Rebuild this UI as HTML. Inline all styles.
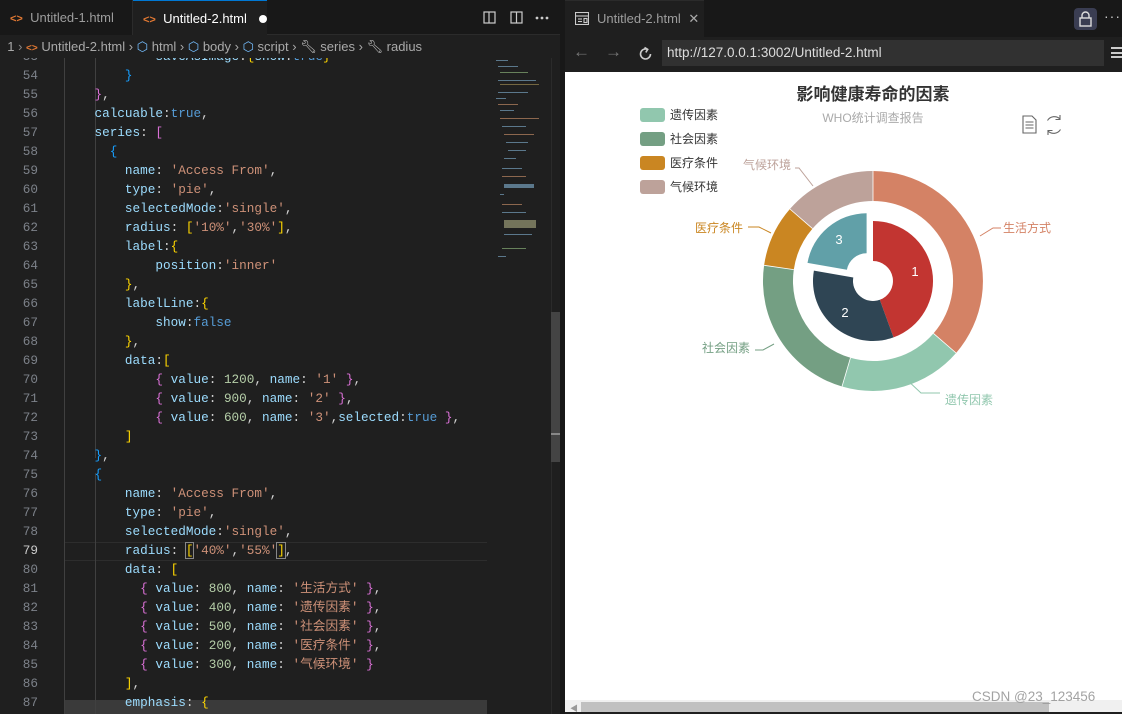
<!DOCTYPE html>
<html><head><meta charset="utf-8">
<style>
*{margin:0;padding:0;box-sizing:border-box}
body{width:1122px;height:714px;overflow:hidden;background:#1f1f1f;position:relative;font-family:"Liberation Sans","Noto Sans CJK SC",sans-serif}
.abs{position:absolute}
.tabbar{left:0;top:0;width:565px;height:35px;background:#181818;border-bottom:1px solid #2b2b2b}
.tab{top:0;height:35px;font-size:13px;line-height:35px;color:#9d9d9d;padding-left:10px}
.crumb{left:0;top:35px;width:565px;height:23px;background:#1f1f1f;font-size:13px;color:#a9a9a9;line-height:23px;white-space:nowrap}
.code{left:0;top:58px;width:551px;height:656px;overflow:hidden;background:#1f1f1f}
.lines{position:absolute;left:0;top:-11.5px;width:100%}
.ln{height:19px;line-height:19px;font-family:"Liberation Mono","Noto Sans CJK SC",monospace;font-size:12.7px;white-space:pre;position:relative}
.ln .num{position:absolute;left:0;width:38px;text-align:right;color:#7d828a}
.ln .t{position:absolute;left:64px;color:#d4d4d4}
.k{color:#9cdcfe}.s{color:#ce9178}.n{color:#b5cea8}.b{color:#569cd6}.y{color:#ffd700}.p{color:#da70d6}.u{color:#179fff}
</style></head><body>
<div class="abs tabbar"></div>
<div class="abs tab" style="left:0;width:133px;background:#181818;border-right:1px solid #2b2b2b"><span style="color:#e37933;font-size:11px;font-weight:bold">&lt;&gt;</span>&nbsp; Untitled-1.html</div>
<div class="abs tab" style="left:133px;width:134px;background:#1f1f1f;color:#fff;border-top:1px solid #0078d4;height:36px"><span style="color:#e37933;font-size:11px;font-weight:bold">&lt;&gt;</span>&nbsp; Untitled-2.html <span style="display:inline-block;width:8px;height:8px;border-radius:50%;background:#fff;margin-left:8px"></span></div>
<svg class="abs" style="left:482px;top:10px" width="70" height="16" viewBox="0 0 70 16" fill="none" stroke="#ccc" stroke-width="1.2">
<rect x="2" y="2" width="11" height="11"/><line x1="7" y1="2" x2="7" y2="13"/>
<rect x="29" y="2" width="11" height="11"/><line x1="34.5" y1="2" x2="34.5" y2="13"/>
<circle cx="55" cy="8" r="0.8" fill="#ccc"/><circle cx="60" cy="8" r="0.8" fill="#ccc"/><circle cx="65" cy="8" r="0.8" fill="#ccc"/>
</svg>
<div class="abs crumb">&nbsp;&nbsp;1 <span style="color:#888">›</span> <span style="color:#e37933;font-size:10px;font-weight:bold">&lt;&gt;</span> Untitled-2.html <span>›</span> <span style="color:#75beff">⬡</span> html › <span style="color:#75beff">⬡</span> body › <span style="color:#75beff">⬡</span> script › <span style="color:#ccc">🔧︎</span> series › <span style="color:#ccc">🔧︎</span> radius</div>
<div class="abs code">
<div class="abs" style="left:64px;top:484px;width:423px;height:19px;border-top:1px solid #2d2d2d;border-bottom:1px solid #2d2d2d"></div>
<div class="abs" style="left:64px;top:642px;width:423px;height:14px;background:#3a3a3a"></div>
<div class="abs" style="left:64px;top:0;width:1px;height:656px;background:#404040"></div>
<div class="abs" style="left:95px;top:0;width:1px;height:400px;background:#404040"></div>
<div class="abs" style="left:95px;top:415px;width:1px;height:241px;background:#404040"></div>
<div class="lines">
<div class="ln"><span class="num">53</span><span class="t">            <span class="k">saveAsImage</span>:<span class="y">{</span><span class="k">show</span>:<span class="b">true</span><span class="y">}</span></span></div>
<div class="ln"><span class="num">54</span><span class="t">        <span class="u">}</span></span></div>
<div class="ln"><span class="num">55</span><span class="t">    <span class="p">}</span>,</span></div>
<div class="ln"><span class="num">56</span><span class="t">    <span class="k">calcuable</span>:<span class="b">true</span>,</span></div>
<div class="ln"><span class="num">57</span><span class="t">    <span class="k">series</span>: <span class="p">[</span></span></div>
<div class="ln"><span class="num">58</span><span class="t">      <span class="u">{</span></span></div>
<div class="ln"><span class="num">59</span><span class="t">        <span class="k">name</span>: <span class="s">'Access From'</span>,</span></div>
<div class="ln"><span class="num">60</span><span class="t">        <span class="k">type</span>: <span class="s">'pie'</span>,</span></div>
<div class="ln"><span class="num">61</span><span class="t">        <span class="k">selectedMode</span>:<span class="s">'single'</span>,</span></div>
<div class="ln"><span class="num">62</span><span class="t">        <span class="k">radius</span>: <span class="y">[</span><span class="s">'10%'</span>,<span class="s">'30%'</span><span class="y">]</span>,</span></div>
<div class="ln"><span class="num">63</span><span class="t">        <span class="k">label</span>:<span class="y">{</span></span></div>
<div class="ln"><span class="num">64</span><span class="t">            <span class="k">position</span>:<span class="s">'inner'</span></span></div>
<div class="ln"><span class="num">65</span><span class="t">        <span class="y">}</span>,</span></div>
<div class="ln"><span class="num">66</span><span class="t">        <span class="k">labelLine</span>:<span class="y">{</span></span></div>
<div class="ln"><span class="num">67</span><span class="t">            <span class="k">show</span>:<span class="b">false</span></span></div>
<div class="ln"><span class="num">68</span><span class="t">        <span class="y">}</span>,</span></div>
<div class="ln"><span class="num">69</span><span class="t">        <span class="k">data</span>:<span class="y">[</span></span></div>
<div class="ln"><span class="num">70</span><span class="t">            <span class="p">{</span> <span class="k">value</span>: <span class="n">1200</span>, <span class="k">name</span>: <span class="s">'1'</span> <span class="p">}</span>,</span></div>
<div class="ln"><span class="num">71</span><span class="t">            <span class="p">{</span> <span class="k">value</span>: <span class="n">900</span>, <span class="k">name</span>: <span class="s">'2'</span> <span class="p">}</span>,</span></div>
<div class="ln"><span class="num">72</span><span class="t">            <span class="p">{</span> <span class="k">value</span>: <span class="n">600</span>, <span class="k">name</span>: <span class="s">'3'</span>,<span class="k">selected</span>:<span class="b">true</span> <span class="p">}</span>,</span></div>
<div class="ln"><span class="num">73</span><span class="t">        <span class="y">]</span></span></div>
<div class="ln"><span class="num">74</span><span class="t">    <span class="u">}</span>,</span></div>
<div class="ln"><span class="num">75</span><span class="t">    <span class="u">{</span></span></div>
<div class="ln"><span class="num">76</span><span class="t">        <span class="k">name</span>: <span class="s">'Access From'</span>,</span></div>
<div class="ln"><span class="num">77</span><span class="t">        <span class="k">type</span>: <span class="s">'pie'</span>,</span></div>
<div class="ln"><span class="num">78</span><span class="t">        <span class="k">selectedMode</span>:<span class="s">'single'</span>,</span></div>
<div class="ln"><span class="num" style="color:#ccc">79</span><span class="t">        <span class="k">radius</span>: <span class="y" style="outline:1px solid #888">[</span><span class="s">'40%'</span>,<span class="s">'55%'</span><span class="y" style="outline:1px solid #888">]</span>,</span></div>
<div class="ln"><span class="num">80</span><span class="t">        <span class="k">data</span>: <span class="y">[</span></span></div>
<div class="ln"><span class="num">81</span><span class="t">          <span class="p">{</span> <span class="k">value</span>: <span class="n">800</span>, <span class="k">name</span>: <span class="s">'生活方式'</span> <span class="p">}</span>,</span></div>
<div class="ln"><span class="num">82</span><span class="t">          <span class="p">{</span> <span class="k">value</span>: <span class="n">400</span>, <span class="k">name</span>: <span class="s">'遗传因素'</span> <span class="p">}</span>,</span></div>
<div class="ln"><span class="num">83</span><span class="t">          <span class="p">{</span> <span class="k">value</span>: <span class="n">500</span>, <span class="k">name</span>: <span class="s">'社会因素'</span> <span class="p">}</span>,</span></div>
<div class="ln"><span class="num">84</span><span class="t">          <span class="p">{</span> <span class="k">value</span>: <span class="n">200</span>, <span class="k">name</span>: <span class="s">'医疗条件'</span> <span class="p">}</span>,</span></div>
<div class="ln"><span class="num">85</span><span class="t">          <span class="p">{</span> <span class="k">value</span>: <span class="n">300</span>, <span class="k">name</span>: <span class="s">'气候环境'</span> <span class="p">}</span></span></div>
<div class="ln"><span class="num">86</span><span class="t">        <span class="y">]</span>,</span></div>
<div class="ln"><span class="num">87</span><span class="t">        <span class="k">emphasis</span>: <span class="y">{</span></span></div>
</div>
<svg class="abs" style="left:494px;top:0" width="45" height="210">
<g fill="#6a8fa8" opacity="0.8">
<rect x="2" y="2" width="12" height="1"/><rect x="4" y="8" width="20" height="1"/><rect x="6" y="14" width="28" height="1" fill="#7a9a6a"/>
<rect x="4" y="22" width="38" height="1"/><rect x="6" y="26" width="40" height="1" fill="#8a7a4a"/><rect x="4" y="34" width="30" height="1"/>
<rect x="2" y="40" width="10" height="1"/><rect x="4" y="46" width="20" height="1" fill="#a87a5a"/><rect x="6" y="52" width="14" height="1"/>
<rect x="6" y="60" width="40" height="1" fill="#a87a5a"/><rect x="8" y="68" width="24" height="1"/><rect x="10" y="76" width="30" height="1" fill="#a87a5a"/>
<rect x="12" y="84" width="22" height="1"/><rect x="14" y="92" width="18" height="1"/><rect x="10" y="100" width="12" height="1"/>
<rect x="8" y="110" width="20" height="1"/><rect x="8" y="118" width="24" height="1" fill="#a87a5a"/><rect x="10" y="126" width="30" height="4"/>
<rect x="6" y="136" width="4" height="1"/><rect x="8" y="146" width="20" height="1" fill="#a87a5a"/><rect x="8" y="154" width="24" height="1"/>
<rect x="10" y="162" width="32" height="8" fill="#8a8a6a"/><rect x="10" y="176" width="28" height="1"/><rect x="8" y="190" width="24" height="1" fill="#7a9a6a"/><rect x="4" y="198" width="8" height="1"/>
</g></svg>
</div>
<div class="abs" style="left:551px;top:58px;width:14px;height:656px;background:#1f1f1f;border-left:1px solid #2b2b2b"></div>
<div class="abs" style="left:551px;top:312px;width:14px;height:150px;background:#444"></div>
<div class="abs" style="left:551px;top:433px;width:14px;height:2px;background:#888"></div>
<div class="abs" style="left:560px;top:0;width:5px;height:714px;background:#181818"></div>

<div class="abs" style="left:565px;top:0;width:557px;height:37px;background:#181818"></div>
<div class="abs" style="left:565px;top:0;width:139px;height:37px;background:#1f1f1f;border-top:1px solid #2b2b2b"></div>
<svg class="abs" style="left:575px;top:12px" width="14" height="13" fill="none" stroke="#ccc" stroke-width="1.1"><rect x="0.5" y="0.5" width="13" height="12"/><line x1="0.5" y1="4" x2="13.5" y2="4"/><line x1="3" y1="7" x2="7" y2="7"/><line x1="3" y1="9.5" x2="7" y2="9.5"/><rect x="9" y="6.5" width="3" height="4"/></svg>
<div class="abs" style="left:597px;top:0;line-height:37px;font-size:13px;color:#9d9d9d">Untitled-2.html <span style="margin-left:4px;color:#aaa">✕</span></div>
<div class="abs" style="left:1074px;top:8px;width:23px;height:22px;border-radius:4px;background:#3a3d52"></div>
<svg class="abs" style="left:1078px;top:11px" width="15" height="16" fill="none" stroke="#ddd" stroke-width="1.4"><path d="M4 7V4.5a3.5 3.5 0 0 1 7 0V7"/><rect x="2" y="7" width="11" height="8"/></svg>
<div class="abs" style="left:1104px;top:8px;color:#ccc;font-size:14px;letter-spacing:1px">···</div>
<div class="abs" style="left:565px;top:37px;width:557px;height:35px;background:#1f1f1f"></div>
<div class="abs" style="left:573px;top:42px;color:#777;font-size:17px">←</div>
<div class="abs" style="left:605px;top:42px;color:#777;font-size:17px">→</div>
<svg class="abs" style="left:638px;top:46px" width="16" height="16" fill="none" stroke="#ccc" stroke-width="1.6"><path d="M12.5 8a5 5 0 1 1-3-4.6"/><path d="M6.5 1.5l3.2 1.9-1.9 3"/></svg>
<div class="abs" style="left:662px;top:40px;width:442px;height:26px;background:#313131;color:#ddd;font-size:13.5px;line-height:26px;padding-left:5px">http://127.0.0.1:3002/Untitled-2.html</div>
<div class="abs" style="left:1111px;top:47px;width:11px;height:11px;border-top:2px solid #ccc;border-bottom:2px solid #ccc"></div>
<div class="abs" style="left:1111px;top:52px;width:11px;height:2px;background:#ccc"></div>

<div class="abs" style="left:565px;top:72px;width:557px;height:640px;background:#fff"></div>
<svg class="abs" style="left:565px;top:72px" width="557" height="630" font-family="Liberation Sans,Noto Sans CJK SC,sans-serif">
<text x="308" y="28" text-anchor="middle" font-size="17" font-weight="bold" fill="#333">影响健康寿命的因素</text>
<text x="308" y="50" text-anchor="middle" font-size="12" fill="#aaa">WHO统计调查报告</text>
<g font-size="12" fill="#333">
<rect x="75" y="36" width="25" height="14" rx="3" fill="#91c7ae"/><text x="105" y="47">遗传因素</text>
<rect x="75" y="60" width="25" height="14" rx="3" fill="#749f83"/><text x="105" y="71">社会因素</text>
<rect x="75" y="84" width="25" height="14" rx="3" fill="#ca8622"/><text x="105" y="95">医疗条件</text>
<rect x="75" y="108" width="25" height="14" rx="3" fill="#bda29a"/><text x="105" y="119">气候环境</text>
</g>
<g fill="none" stroke="#666" stroke-width="1.1">
<path d="M458 44h9l4 4v13h-13z"/><path d="M460.5 50h8M460.5 53h8M460.5 56h8"/>
<path d="M495 47a8 8 0 0 0-12.5 1.5M483 59a8 8 0 0 0 12.5-1.5"/><path d="M495 43v4.5h-4.5M483 63v-4.5h4.5"/>
</g>
<path d="M308 99A110 110 0 0 1 391.1 281L368.5 261.4A80 80 0 0 0 308 129Z" fill="#d48265"/>
<path d="M391.1 281A110 110 0 0 1 277 314.5L285.5 285.8A80 80 0 0 0 368.5 261.4Z" fill="#91c7ae"/>
<path d="M277 314.5A110 110 0 0 1 199.1 193.3L228.8 197.6A80 80 0 0 0 285.5 285.8Z" fill="#749f83"/>
<path d="M199.1 193.3A110 110 0 0 1 224.9 137L247.5 156.6A80 80 0 0 0 228.8 197.6Z" fill="#ca8622"/>
<path d="M224.9 137A110 110 0 0 1 308 99L308 129A80 80 0 0 0 247.5 156.6Z" fill="#bda29a"/>
<g stroke="#fff" stroke-width="0.8" fill="none"><path d="M308 99V129M391.1 281L368.5 261.4M277 314.5L285.5 285.8M199.1 193.3L228.8 197.6M224.9 137L247.5 156.6"/></g>
<path d="M308 149A60 60 0 0 1 328.5 265.4L314.8 227.8A20 20 0 0 0 308 189Z" fill="#c23531"/>
<path d="M328.5 265.4A60 60 0 0 1 248.9 198.6L288.3 205.5A20 20 0 0 0 314.8 227.8Z" fill="#2f4554"/>
<path d="M242.5 190.9A60 60 0 0 1 301.6 141.3L301.6 181.3A20 20 0 0 0 281.9 197.8Z" fill="#61a0a8"/>
<g font-size="13" fill="#fff" text-anchor="middle"><text x="350" y="204">1</text><text x="280" y="245">2</text><text x="274" y="172">3</text></g>
<g fill="none" stroke-width="1">
<path d="M415 164L428 156H436" stroke="#d48265"/>
<path d="M340 306L356 321H375" stroke="#91c7ae"/>
<path d="M209 272L198 278H190" stroke="#749f83"/>
<path d="M206 161L194 155H183" stroke="#ca8622"/>
<path d="M248 114L234 96H230" stroke="#bda29a"/>
</g>
<g font-size="12">
<text x="438" y="160" fill="#d48265">生活方式</text>
<text x="380" y="332" fill="#91c7ae">遗传因素</text>
<text x="185" y="280" text-anchor="end" fill="#749f83">社会因素</text>
<text x="178" y="160" text-anchor="end" fill="#ca8622">医疗条件</text>
<text x="226" y="97" text-anchor="end" fill="#bda29a">气候环境</text>
</g>
</svg>
<div class="abs" style="left:565px;top:700px;width:557px;height:12px;background:#f0f0f0"></div>
<div class="abs" style="left:581px;top:702px;width:468px;height:10px;background:#c1c1c1"></div>
<div class="abs" style="left:570px;top:703px;font-size:8px;color:#999">◀</div>
<div class="abs" style="left:565px;top:712px;width:557px;height:2px;background:#1f1f1f"></div>
<div class="abs" style="left:972px;top:689px;font-size:13.5px;color:#999;opacity:0.9;white-space:nowrap">CSDN @23_123456</div>
</body></html>
